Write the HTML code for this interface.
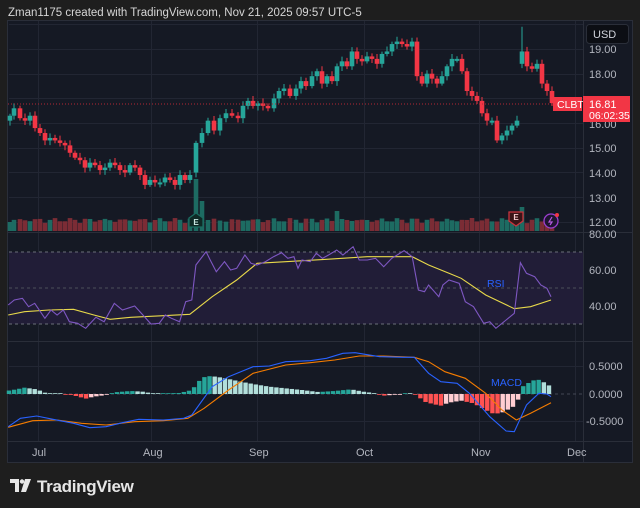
<!DOCTYPE html>
<html><head><meta charset="utf-8"><style>
html,body{margin:0;padding:0;background:#1e1e1e;width:640px;height:508px;overflow:hidden}
svg{display:block}
text{font-family:"Liberation Sans",sans-serif}
</style></head><body>
<svg id="s" width="640" height="508" viewBox="0 0 640 508" xmlns="http://www.w3.org/2000/svg">
<rect width="640" height="508" fill="#1e1e1e"/>
<text x="8" y="16" font-size="11.5" fill="#d6d6d6">Zman1175 created with TradingView.com, Nov 21, 2025 09:57 UTC-5</text>
<rect x="7.5" y="20.5" width="625" height="442" fill="#151924" stroke="#2a2e39"/>
<g id="grid" stroke="#222633" stroke-width="1"></g>
<rect x="9" y="252" width="574" height="72" fill="#211d37"/>
<line x1="9" y1="252" x2="583" y2="252" stroke="#6b6e7a" stroke-dasharray="3,3"/>
<line x1="9" y1="288" x2="583" y2="288" stroke="#4c4f5a" stroke-dasharray="3,3"/>
<line x1="9" y1="324" x2="583" y2="324" stroke="#6b6e7a" stroke-dasharray="3,3"/>
<line x1="9" y1="394" x2="583" y2="394" stroke="#444855" stroke-dasharray="3,3"/>
<g id="vol"></g>
<g id="cand"></g>
<g id="ind"></g>
<line x1="8" y1="104" x2="553" y2="104" stroke="#b22833" stroke-dasharray="1,2"/>
<line x1="8" y1="232.5" x2="632" y2="232.5" stroke="#2a2e39"/>
<line x1="8" y1="341.5" x2="632" y2="341.5" stroke="#2a2e39"/>
<line x1="8" y1="441.5" x2="632" y2="441.5" stroke="#2a2e39"/>
<line x1="583.5" y1="21" x2="583.5" y2="462" stroke="#2a2e39"/>
<g transform="translate(196,221)">
<path d="M-7,-3 L0,-8 L7,-3 L7,6 L-7,6 Z" fill="#0f2a26" stroke="#1b6b60" stroke-width="1.3"/>
<text x="0" y="4" font-size="8" fill="#c9e9e3" text-anchor="middle" font-weight="bold">E</text></g>
<g transform="translate(516,218)">
<path d="M-7,-6 L7,-6 L7,3 L0,8 L-7,3 Z" fill="#3a1418" stroke="#c9333d" stroke-width="1.3"/>
<text x="0" y="2" font-size="8" fill="#f3c6ca" text-anchor="middle" font-weight="bold">E</text></g>
<g transform="translate(551,221)">
<circle r="7" fill="#1e1530" stroke="#9c3fd0" stroke-width="1.3"/>
<path d="M1,-4 L-2,1 L1,1 L-1,4" fill="none" stroke="#b55ae0" stroke-width="1.2"/>
<circle cx="6" cy="-6" r="2" fill="#f23645"/></g>
<g font-size="11" fill="#b2b5be">
<text x="589" y="53">19.00</text><text x="589" y="78">18.00</text><text x="589" y="152">15.00</text>
<text x="589" y="177">14.00</text><text x="589" y="202">13.00</text><text x="589" y="226">12.00</text>
<text x="589" y="128">16.00</text>
<text x="589" y="238">80.00</text><text x="589" y="274">60.00</text><text x="589" y="310">40.00</text>
<text x="589" y="370">0.5000</text><text x="589" y="398">0.0000</text><text x="586" y="425">-0.5000</text>
<text x="32" y="456">Jul</text><text x="143" y="456">Aug</text><text x="249" y="456">Sep</text>
<text x="356" y="456">Oct</text><text x="471" y="456">Nov</text><text x="567" y="456">Dec</text>
</g>
<rect x="586.5" y="24.5" width="42" height="19" rx="3" fill="#0c0e14" stroke="#2a2e39"/>
<text x="593" y="38" font-size="11" fill="#d1d4dc">USD</text>
<rect x="553" y="97" width="29" height="14" fill="#f23645"/>
<text x="557" y="108" font-size="10.5" fill="#fff">CLBT</text>
<rect x="583" y="96" width="47" height="26" fill="#f23645"/>
<text x="589" y="108" font-size="11" fill="#fff">16.81</text>
<text x="589" y="119" font-size="10.5" fill="#fff">06:02:35</text>
<text x="487" y="287" font-size="10.5" fill="#2962ff">RSI</text>
<text x="491" y="386" font-size="10.5" fill="#2962ff">MACD</text>
<g fill="#e6e6e6">
<path d="M10,479 h9 v13 h-4 v-9 h-5 z"/><circle cx="22" cy="481.5" r="2.2"/><path d="M25,479 h6 l-5,13 h-5 z"/>
</g>
<text x="37" y="492" font-size="17" font-weight="bold" fill="#e6e6e6" letter-spacing="-0.3">TradingView</text>
</svg>
<script>
var NS="http://www.w3.org/2000/svg";
function el(p,t,a){var e=document.createElementNS(NS,t);for(var k in a)e.setAttribute(k,a[k]);p.appendChild(e);return e;}
var g=document.getElementById('grid');
[24,49,74,98,123,148,172,197,222].forEach(function(y){el(g,'line',{x1:9,y1:y+.5,x2:583,y2:y+.5});});
[270,306].forEach(function(y){el(g,'line',{x1:9,y1:y+.5,x2:583,y2:y+.5});});
[366,421].forEach(function(y){el(g,'line',{x1:9,y1:y+.5,x2:583,y2:y+.5});});
[38,151,257,364,479,575].forEach(function(x){el(g,'line',{x1:x+.5,y1:21,x2:x+.5,y2:441});});
function py(p){return 49+(19-p)*24.71;}
var C=[[10,16.3],[14,16.6],[20,16.2],[25,16.1],[30,16.3],[35,15.8],[40,15.6],[45,15.3],[50,15.4],[55,15.3],[60,15.2],[65,15.1],[70,14.8],[75,14.6],[80,14.5],[85,14.2],[90,14.4],[95,14.3],[100,14.1],[105,14.2],[110,14.4],[115,14.3],[120,14.1],[125,14.0],[130,14.3],[135,14.2],[140,13.9],[145,13.5],[150,13.7],[155,13.6],[160,13.6],[165,13.8],[170,13.7],[175,13.5],[180,13.9],[185,13.7],[190,13.9],[196,15.2],[202,15.6],[208,16.1],[214,15.7],[220,16.2],[226,16.4],[232,16.3],[238,16.2],[243,16.7],[248,16.9],[253,16.7],[258,16.8],[263,16.7],[268,16.6],[274,17.0],[279,17.3],[284,17.4],[290,17.1],[296,17.4],[301,17.7],[306,17.5],[312,17.9],[317,18.1],[322,17.6],[327,17.9],[332,17.7],[337,18.3],[342,18.5],[347,18.3],[352,18.9],[357,18.6],[362,18.5],[367,18.7],[372,18.6],[377,18.4],[382,18.8],[387,18.9],[392,19.2],[397,19.3],[402,19.2],[407,19.1],[412,19.3],[417,17.9],[422,17.6],[427,18.0],[432,17.8],[437,17.6],[442,17.9],[447,18.3],[452,18.6],[457,18.6],[462,18.1],[467,17.3],[472,17.1],[477,16.9],[482,16.4],[487,16.1],[492,16.1],[497,15.3],[502,15.5],[507,15.7],[512,15.9],[517,16.1],[522,18.9],[527,18.3],[532,18.2],[537,18.4],[542,17.6],[547,17.3],[552,16.81]];
var cg=document.getElementById('cand'),vg=document.getElementById('vol');
var big={196:52,202:30,262:21,337:20,522:24,472:13,367:11,302:12};
for(var i=0;i<C.length;i++){var x=C[i][0],c=C[i][1],o=i?C[i-1][1]:16.1;
 if(x==522)o=18.4;
 if(x==196)o=14.0;
 var up=c>=o,col=up?'#26a69a':'#f23645';
 var hi=Math.max(o,c)+0.08+0.12*Math.abs(Math.sin(i*1.7)),lo=Math.min(o,c)-0.08-0.12*Math.abs(Math.cos(i*2.3));
 if(x==522)hi=19.9;
 el(cg,'line',{x1:x,y1:py(hi),x2:x,y2:py(lo),stroke:col,'stroke-width':1});
 var t=py(Math.max(o,c)),b=py(Math.min(o,c));if(b-t<2)b=t+2;
 el(cg,'rect',{x:x-2.3,y:t,width:4.6,height:b-t,fill:col});
 var h=big[x]||(7+4*Math.abs(Math.sin(i*0.9))+2*Math.abs(Math.cos(i*2.1)));
 el(vg,'rect',{x:x-2.3,y:231-h,width:4.6,height:h,fill:up?'#1d6b62':'#7b2c35'});
}
function pts(a){return a.map(function(p){return (p[0]/2.45).toFixed(1)+','+(230+p[1]/3).toFixed(1);}).join(' ');}
var ig=document.getElementById('ind');
var RSI=[[20,225],[35,210],[55,205],[70,230],[85,220],[110,265],[125,240],[140,255],[155,240],[170,275],[190,280],[210,295],[235,262],[255,275],[280,220],[300,240],[330,228],[350,255],[370,282],[390,280],[405,255],[420,265],[440,275],[455,215],[470,210],[480,105],[505,65],[515,90],[530,125],[550,95],[565,120],[580,115],[600,75],[615,100],[630,105],[650,95],[670,80],[690,68],[705,85],[720,80],[730,115],[740,90],[760,95],[775,70],[790,85],[805,75],[825,60],[840,75],[865,50],[880,90],[900,90],[920,85],[940,110],[960,85],[990,62],[1010,80],[1025,180],[1040,185],[1050,165],[1075,200],[1085,165],[1100,150],[1125,160],[1140,215],[1160,230],[1185,280],[1200,275],[1215,295],[1240,270],[1260,250],[1275,98],[1290,130],[1310,140],[1325,165],[1340,175],[1350,200]];
var RMA=[[20,255],[60,245],[120,240],[180,238],[230,255],[270,268],[320,262],[400,257],[465,253],[520,200],[580,150],[630,100],[700,95],[800,88],[900,80],[1010,80],[1050,105],[1100,130],[1130,145],[1190,195],[1260,236],[1300,230],[1350,210]];
var BL=[[20,590],[50,565],[90,558],[130,568],[180,580],[220,593],[260,590],[300,578],[340,568],[400,570],[450,565],[470,555],[520,470],[560,440],[590,425],[620,410],[660,408],[700,395],[760,392],[800,385],[840,370],[870,368],[930,380],[990,382],[1015,382],[1050,430],[1080,455],[1120,460],[1150,490],[1200,560],[1240,603],[1260,605],[1290,525],[1320,490],[1340,492],[1350,500]];
var OR=[[20,592],[80,572],[140,570],[200,580],[260,585],[330,575],[400,572],[460,565],[500,535],[560,480],[620,430],[700,405],[760,398],[820,390],[880,378],[940,378],[1015,382],[1050,395],[1090,425],[1140,445],[1190,490],[1230,540],[1265,570],[1300,550],[1350,518]];
// histogram heights from reference (x3, top y3)
var H=[[20,482],[40,478],[60,473],[90,478],[110,488],[130,491],[160,492],[180,496],[210,506],[230,500],[260,495],[280,487],[320,483],[350,485],[380,492],[400,490],[440,489],[470,480],[490,450],[505,438],[530,440],[560,447],[590,455],[620,462],[660,470],[700,475],[740,480],[780,486],[820,483],[860,478],[890,485],[920,490],[940,497],[970,494],[1000,490],[1020,495],[1040,515],[1060,522],[1080,527],[1100,518],[1130,512],[1160,520],[1190,540],[1210,552],[1230,548],[1250,535],[1265,525],[1280,470],[1300,455],[1315,447],[1330,455],[1350,470]];
function interp(a,x){if(x<=a[0][0])return a[0][1];for(var i=1;i<a.length;i++){if(x<=a[i][0]){var t=(x-a[i-1][0])/(a[i][0]-a[i-1][0]);return a[i-1][1]+t*(a[i][1]-a[i-1][1]);}}return a[a.length-1][1];}
var prev=0;
for(var x3=22;x3<=1352;x3+=12.6){var h=(492-interp(H,x3))/3;
 var x=x3/2.45;var col;
 if(h>=0)col=(h>=prev)?'#26a69a':'#b2dfdb';else col=(h<=prev)?'#ff5252':'#ffcdd2';
 prev=h; if(Math.abs(h)<0.8)h=h<0?-0.8:0.8;
 el(ig,'rect',{x:x-2.2,y:h>0?394-h:394,width:4.4,height:Math.abs(h),fill:col});
}
el(ig,'polyline',{points:pts(RMA),fill:'none',stroke:'#e8d94a','stroke-width':1.1});
el(ig,'polyline',{points:pts(RSI),fill:'none',stroke:'#7e57c2','stroke-width':1.1});
el(ig,'polyline',{points:pts(OR),fill:'none',stroke:'#f57c00','stroke-width':1.1});
el(ig,'polyline',{points:pts(BL),fill:'none',stroke:'#2962ff','stroke-width':1.1});
</script>
</body></html>
